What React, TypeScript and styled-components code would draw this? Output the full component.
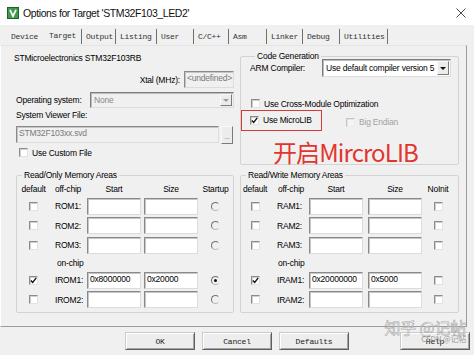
import styled, { createGlobalStyle, css } from "styled-components";

const GlobalStyle = createGlobalStyle`
  html, body {
    margin: 0;
    padding: 0;
    background: #f0f0f0;
  }
  body {
    font-family: "Liberation Sans", Arial, sans-serif;
  }
  * {
    box-sizing: border-box;
  }
`;

const romRows = [
    { name: "ROM1:", start: "", size: "", on: false, sel: false },
    { name: "ROM2:", start: "", size: "", on: false, sel: false },
    { name: "ROM3:", start: "", size: "", on: false, sel: false },
];
const iromRows = [
    { name: "IROM1:", start: "0x8000000", size: "0x20000", on: true, sel: true },
    { name: "IROM2:", start: "", size: "", on: false, sel: false },
];
const ramRows = [
    { name: "RAM1:", start: "", size: "", on: false },
    { name: "RAM2:", start: "", size: "", on: false },
    { name: "RAM3:", start: "", size: "", on: false },
];
const iramRows = [
    { name: "IRAM1:", start: "0x20000000", size: "0x5000", on: true },
    { name: "IRAM2:", start: "", size: "", on: false },
];

const tabs = [
    { label: "Device", w: 38 },
    { label: "Target", w: 37, active: true },
    { label: "Output", w: 34 },
    { label: "Listing", w: 41 },
    { label: "User", w: 37 },
    { label: "C/C++", w: 35 },
    { label: "Asm", w: 38 },
    { label: "Linker", w: 36 },
    { label: "Debug", w: 37 },
    { label: "Utilities", w: 49, last: true },
];

const Check = ({ checked, disabled }: { checked?: boolean; disabled?: boolean }) => (
    <CheckBox $disabled={disabled}>
        {checked && (
            <svg width="7" height="7" viewBox="0 0 7 7">
                <path d="M0.8 3.4 L2.7 5.4 L6.2 0.9" fill="none" stroke="#111" strokeWidth="1.4" />
            </svg>
        )}
    </CheckBox>
);

const App = () => {
    return (
        <>
            <GlobalStyle />
            <Window>
                <TitleBar>
                    <svg width="12" height="12" viewBox="0 0 12 12">
                        <rect x="0.5" y="0.5" width="11" height="11" fill="#3f9b48" stroke="#22622a" />
                        <path d="M3 2.8 L6 9.2 L9 2.8" fill="none" stroke="#fff" strokeWidth="1.7" />
                    </svg>
                    <Title>Options for Target 'STM32F103_LED2'</Title>
                    <svg width="10" height="10" viewBox="0 0 10 10">
                        <path d="M0.5 0.5 L9.5 9.5 M9.5 0.5 L0.5 9.5" stroke="#333" strokeWidth="0.9" />
                    </svg>
                </TitleBar>

                <TabBar>
                    {tabs.map((t, i) => (
                        <Tab key={t.label} $w={t.w} $sep={i > 1} $last={t.last} $active={t.active}>
                            {t.label}
                        </Tab>
                    ))}
                </TabBar>

                <Page>
                    <Column>
                        <Vendor>STMicroelectronics STM32F103RB</Vendor>
                        <XtalRow>
                            <span>Xtal (MHz):</span>
                            <Field $w={50} $disabled>&lt;undefined&gt;</Field>
                        </XtalRow>
                        <OsRow>
                            <span>Operating system:</span>
                            <Select $w={144} $disabled>
                                None
                                <Arrow $disabled />
                            </Select>
                        </OsRow>
                        <Label>System Viewer File:</Label>
                        <SvdRow>
                            <Field $w={203} $disabled>STM32F103xx.svd</Field>
                            <DotsButton>...</DotsButton>
                        </SvdRow>
                        <CheckRow $ml={3}>
                            <Check />
                            <span>Use Custom File</span>
                        </CheckRow>
                    </Column>

                    <CodeGen>
                        <Legend>Code Generation</Legend>
                        <CompilerRow>
                            <span>ARM Compiler:</span>
                            <Select $w={129}>
                                Use default compiler version 5
                                <Arrow />
                            </Select>
                        </CompilerRow>
                        <CheckRow $ml={1} $mt={21}>
                            <Check />
                            <span>Use Cross-Module Optimization</span>
                        </CheckRow>
                        <LibRow>
                            <Highlight>
                                <Check checked />
                                <span>Use MicroLIB</span>
                            </Highlight>
                            <CheckRow $ml={24} $muted>
                                <Check disabled />
                                <span>Big Endian</span>
                            </CheckRow>
                        </LibRow>
                        <Note>开启MircroLIB</Note>
                    </CodeGen>

                    <Group>
                        <Legend>Read/Only Memory Areas</Legend>
                        <MemTable>
                            <MemRow $cols="33px 37px 57px 54px 1fr" $h={12}>
                                <Cell $center>default</Cell>
                                <Cell $pad={5}>off-chip</Cell>
                                <HeadCell>Start</HeadCell>
                                <HeadCell>Size</HeadCell>
                                <Cell $center>Startup</Cell>
                            </MemRow>
                            {romRows.map((r) => (
                                <MemRow key={r.name} $cols="33px 37px 57px 54px 1fr" $h={17}>
                                    <Cell $center><Check checked={r.on} /></Cell>
                                    <Cell $pad={5}>{r.name}</Cell>
                                    <Field $w={54}>{r.start}</Field>
                                    <Field $w={54}>{r.size}</Field>
                                    <Cell $center><Radio $on={r.sel} /></Cell>
                                </MemRow>
                            ))}
                            <MemRow $cols="33px 37px 1fr" $h={13}>
                                <span />
                                <Cell $pad={7}>on-chip</Cell>
                            </MemRow>
                            {iromRows.map((r) => (
                                <MemRow key={r.name} $cols="33px 37px 57px 54px 1fr" $h={17}>
                                    <Cell $center><Check checked={r.on} /></Cell>
                                    <Cell $pad={5}>{r.name}</Cell>
                                    <Field $w={54}>{r.start}</Field>
                                    <Field $w={54}>{r.size}</Field>
                                    <Cell $center><Radio $on={r.sel} /></Cell>
                                </MemRow>
                            ))}
                        </MemTable>
                    </Group>

                    <Group>
                        <Legend>Read/Write Memory Areas</Legend>
                        <MemTable>
                            <MemRow $cols="28px 40px 59px 54px 32px" $h={12}>
                                <Cell $center>default</Cell>
                                <Cell $pad={9}>off-chip</Cell>
                                <HeadCell>Start</HeadCell>
                                <HeadCell>Size</HeadCell>
                                <Cell $center>NoInit</Cell>
                            </MemRow>
                            {ramRows.map((r) => (
                                <MemRow key={r.name} $cols="28px 40px 59px 54px 32px" $h={17}>
                                    <Cell $center><Check checked={r.on} /></Cell>
                                    <Cell $pad={8}>{r.name}</Cell>
                                    <Field $w={54}>{r.start}</Field>
                                    <Field $w={54}>{r.size}</Field>
                                    <Cell $center><Check /></Cell>
                                </MemRow>
                            ))}
                            <MemRow $cols="28px 40px 1fr" $h={13}>
                                <span />
                                <Cell $pad={9}>on-chip</Cell>
                            </MemRow>
                            {iramRows.map((r) => (
                                <MemRow key={r.name} $cols="28px 40px 59px 54px 32px" $h={17}>
                                    <Cell $center><Check checked={r.on} /></Cell>
                                    <Cell $pad={8}>{r.name}</Cell>
                                    <Field $w={54}>{r.start}</Field>
                                    <Field $w={54}>{r.size}</Field>
                                    <Cell $center><Check /></Cell>
                                </MemRow>
                            ))}
                        </MemTable>
                    </Group>
                </Page>

                <Footer>
                    <Button>OK</Button>
                    <Button>Cancel</Button>
                    <Button>Defaults</Button>
                    <Button $push>Help</Button>
                    <Watermark>
                        知乎 @记帖
                        <small>CSDN @记帖</small>
                    </Watermark>
                </Footer>
            </Window>
        </>
    );
};

const Window = styled.div`
    position: relative;
    width: 474px;
    height: 355px;
    overflow: hidden;
    display: flex;
    flex-direction: column;
    background: #f0f0f0;
    color: #000;
    font-size: 8.5px;
    letter-spacing: -0.2px;
`;

const TitleBar = styled.div`
    height: 25px;
    flex: none;
    display: flex;
    align-items: center;
    padding: 0 8px 0 7px;
    background: #fff;
`;

const Title = styled.div`
    flex: 1;
    margin-left: 4px;
    font-size: 10.5px;
    letter-spacing: -0.4px;
    color: #111;
`;

const TabBar = styled.div`
    height: 20px;
    flex: none;
    display: flex;
    align-items: flex-end;
    padding: 0 0 1px 6px;
`;

const Tab = styled.div<{ $w: number; $sep?: boolean; $last?: boolean; $active?: boolean }>`
    width: ${(p) => p.$w}px;
    height: ${(p) => (p.$active ? 17 : 15)}px;
    display: flex;
    align-items: center;
    padding-left: 4px;
    font-family: "Liberation Mono", "Courier New", monospace;
    font-size: 8px;
    letter-spacing: -0.3px;
    color: #333;
    border-left: 1px solid ${(p) => (p.$sep ? "#6f6f6f" : "transparent")};
    ${(p) =>
        p.$last &&
        css`
            border-right: 1px solid #6f6f6f;
        `}
`;

const Page = styled.div`
    height: 282px;
    flex: none;
    display: grid;
    grid-template-columns: 218px 219px;
    grid-template-rows: 119px 143px;
    column-gap: 6px;
    align-content: start;
    padding: 5px 0 0 15px;
    margin-right: 7px;
    border: 1px solid;
    border-color: #e4e4e4 #9c9c9c #9c9c9c #ffffff;
`;

const Column = styled.div`
    display: flex;
    flex-direction: column;
`;

const Vendor = styled.div`
    margin: 2px 0 0 -2px;
    line-height: 11px;
`;

const XtalRow = styled.div`
    display: flex;
    align-items: center;
    justify-content: flex-end;
    gap: 4px;
    height: 17px;
    margin-top: 7px;
`;

const OsRow = styled.div`
    display: flex;
    align-items: center;
    justify-content: space-between;
    height: 16px;
    margin-top: 4px;
`;

const Label = styled.div`
    line-height: 11px;
    margin-top: 2px;
`;

const SvdRow = styled.div`
    display: flex;
    gap: 2px;
    height: 17px;
    margin-top: 5px;
`;

const CheckRow = styled.div<{ $ml?: number; $mt?: number; $muted?: boolean }>`
    display: flex;
    align-items: center;
    gap: 4px;
    height: 11px;
    margin-left: ${(p) => p.$ml ?? 0}px;
    margin-top: ${(p) => p.$mt ?? 4}px;
    color: ${(p) => (p.$muted ? "#a3a3a3" : "#000")};
`;

const CheckBox = styled.span<{ $disabled?: boolean }>`
    width: 9px;
    height: 9px;
    flex: none;
    display: inline-flex;
    align-items: center;
    justify-content: center;
    background: ${(p) => (p.$disabled ? "#f4f4f4" : "#fff")};
    border: 1px solid;
    border-color: ${(p) => (p.$disabled ? "#c4c4c4 #ececec #ececec #c4c4c4" : "#8c8c8c #e2e2e2 #e2e2e2 #8c8c8c")};
    box-shadow: inset 1px 1px 0 ${(p) => (p.$disabled ? "#e4e4e4" : "#cfcfcf")};
`;

const Radio = styled.span<{ $on?: boolean }>`
    position: relative;
    width: 9px;
    height: 9px;
    display: inline-block;
    border-radius: 50%;
    border: 1px solid;
    border-color: #6f6f6f #ececec #b9b9b9 #6f6f6f;
    ${(p) =>
        p.$on &&
        css`
            &::after {
                content: "";
                position: absolute;
                left: 2px;
                top: 2px;
                width: 3px;
                height: 3px;
                border-radius: 50%;
                background: #111;
            }
        `}
`;

const Field = styled.div<{ $w: number; $disabled?: boolean }>`
    width: ${(p) => p.$w}px;
    height: 17px;
    padding: 1px 0 0 2px;
    line-height: 11px;
    white-space: nowrap;
    overflow: hidden;
    background: ${(p) => (p.$disabled ? "#f0f0f0" : "#fff")};
    color: ${(p) => (p.$disabled ? "#7a7a7a" : "#000")};
    border: 1px solid;
    border-color: #8a8a8a #dcdcdc #dcdcdc #8a8a8a;
    box-shadow: inset 1px 1px 0 #c6c6c6;
`;

const Select = styled.div<{ $w: number; $disabled?: boolean }>`
    width: ${(p) => p.$w}px;
    height: 100%;
    display: flex;
    align-items: center;
    justify-content: space-between;
    padding: 0 1px 0 3px;
    white-space: nowrap;
    background: ${(p) => (p.$disabled ? "#f0f0f0" : "#fff")};
    color: ${(p) => (p.$disabled ? "#8a8a8a" : "#000")};
    border: 1px solid;
    border-color: #7d7d7d #dcdcdc #dcdcdc #7d7d7d;
    box-shadow: inset 1px 1px 0 #bdbdbd;
`;

const Arrow = styled.span<{ $disabled?: boolean }>`
    width: 12px;
    height: calc(100% - 2px);
    display: flex;
    align-items: center;
    justify-content: center;
    background: #ececec;
    border: 1px solid;
    border-color: #fafafa #7a7a7a #7a7a7a #fafafa;
    &::after {
        content: "";
        border-left: 3px solid transparent;
        border-right: 3px solid transparent;
        border-top: 3px solid ${(p) => (p.$disabled ? "#9a9a9a" : "#111")};
    }
`;

const DotsButton = styled.div`
    width: 12px;
    height: 18px;
    display: flex;
    align-items: flex-end;
    justify-content: center;
    padding-bottom: 3px;
    font-size: 7px;
    color: #777;
    background: #ececec;
    border: 1px solid;
    border-color: #f8f8f8 #7a7a7a #7a7a7a #f8f8f8;
`;

const Fieldset = styled.fieldset`
    margin: 0;
    min-width: 0;
    border: 1px solid #d3d3d3;
    border-radius: 2px;
`;

const Legend = styled.legend`
    margin-left: 5px;
    padding: 0 2px;
    line-height: 10px;
`;

const CodeGen = styled(Fieldset)`
    position: relative;
    height: 114px;
    padding: 0 0 0 9px;
`;

const CompilerRow = styled.div`
    display: flex;
    align-items: center;
    justify-content: space-between;
    width: 201px;
    height: 18px;
    margin-top: -2px;
`;

const LibRow = styled.div`
    display: flex;
    align-items: center;
    margin-top: 0.5px;
`;

const Highlight = styled.div`
    display: flex;
    align-items: center;
    gap: 4px;
    width: 81px;
    height: 21px;
    margin-left: -9px;
    padding-left: 8px;
    border: 1.5px solid #d43b38;
`;

const Note = styled.div`
    position: absolute;
    left: 32px;
    top: 79px;
    font-family: "Noto Sans CJK SC", "Noto Sans", sans-serif;
    font-size: 24px;
    line-height: 1;
    letter-spacing: -0.9px;
    color: #e3352f;
`;

const Group = styled(Fieldset)`
    height: 143px;
    padding: 0;
`;

const MemTable = styled.div`
    display: flex;
    flex-direction: column;
    gap: 2.5px;
    padding-top: 3px;
`;

const MemRow = styled.div<{ $cols: string; $h: number }>`
    display: grid;
    grid-template-columns: ${(p) => p.$cols};
    align-items: center;
    height: ${(p) => p.$h}px;
`;

const Cell = styled.div<{ $center?: boolean; $pad?: number }>`
    display: flex;
    align-items: center;
    justify-content: ${(p) => (p.$center ? "center" : "flex-start")};
    padding-left: ${(p) => p.$pad ?? 0}px;
    white-space: nowrap;
`;

const HeadCell = styled.div`
    width: 54px;
    text-align: center;
`;

const Footer = styled.div`
    position: relative;
    flex: 1;
    display: flex;
    align-items: flex-start;
    gap: 7px;
    padding: 5px 4px 0 125px;
`;

const Button = styled.div<{ $push?: boolean }>`
    width: 70px;
    height: 18px;
    display: flex;
    align-items: center;
    justify-content: center;
    margin-left: ${(p) => (p.$push ? "auto" : "0")};
    font-family: "Liberation Mono", "Courier New", monospace;
    font-size: 8px;
    letter-spacing: -0.2px;
    color: #222;
    background: #ededed;
    border: 1px solid;
    border-color: #cbcbcb #5f5f5f #5f5f5f #cbcbcb;
    box-shadow: inset 1px 1px 0 #ffffff, inset -1px -1px 0 #a4a4a4;
`;

const Watermark = styled.div`
    position: absolute;
    right: 8px;
    top: -10px;
    display: flex;
    flex-direction: column;
    align-items: flex-end;
    font-family: "Noto Sans CJK SC", "Noto Sans", sans-serif;
    font-size: 16px;
    line-height: 20px;
    color: rgba(245, 245, 245, 0.75);
    -webkit-text-stroke: 0.6px rgba(150, 150, 150, 0.8);
    small {
        margin-top: -3px;
        font-size: 8px;
        line-height: 10px;
        -webkit-text-stroke: 0;
        color: rgba(120, 120, 120, 0.75);
    }
`;

export default App;
